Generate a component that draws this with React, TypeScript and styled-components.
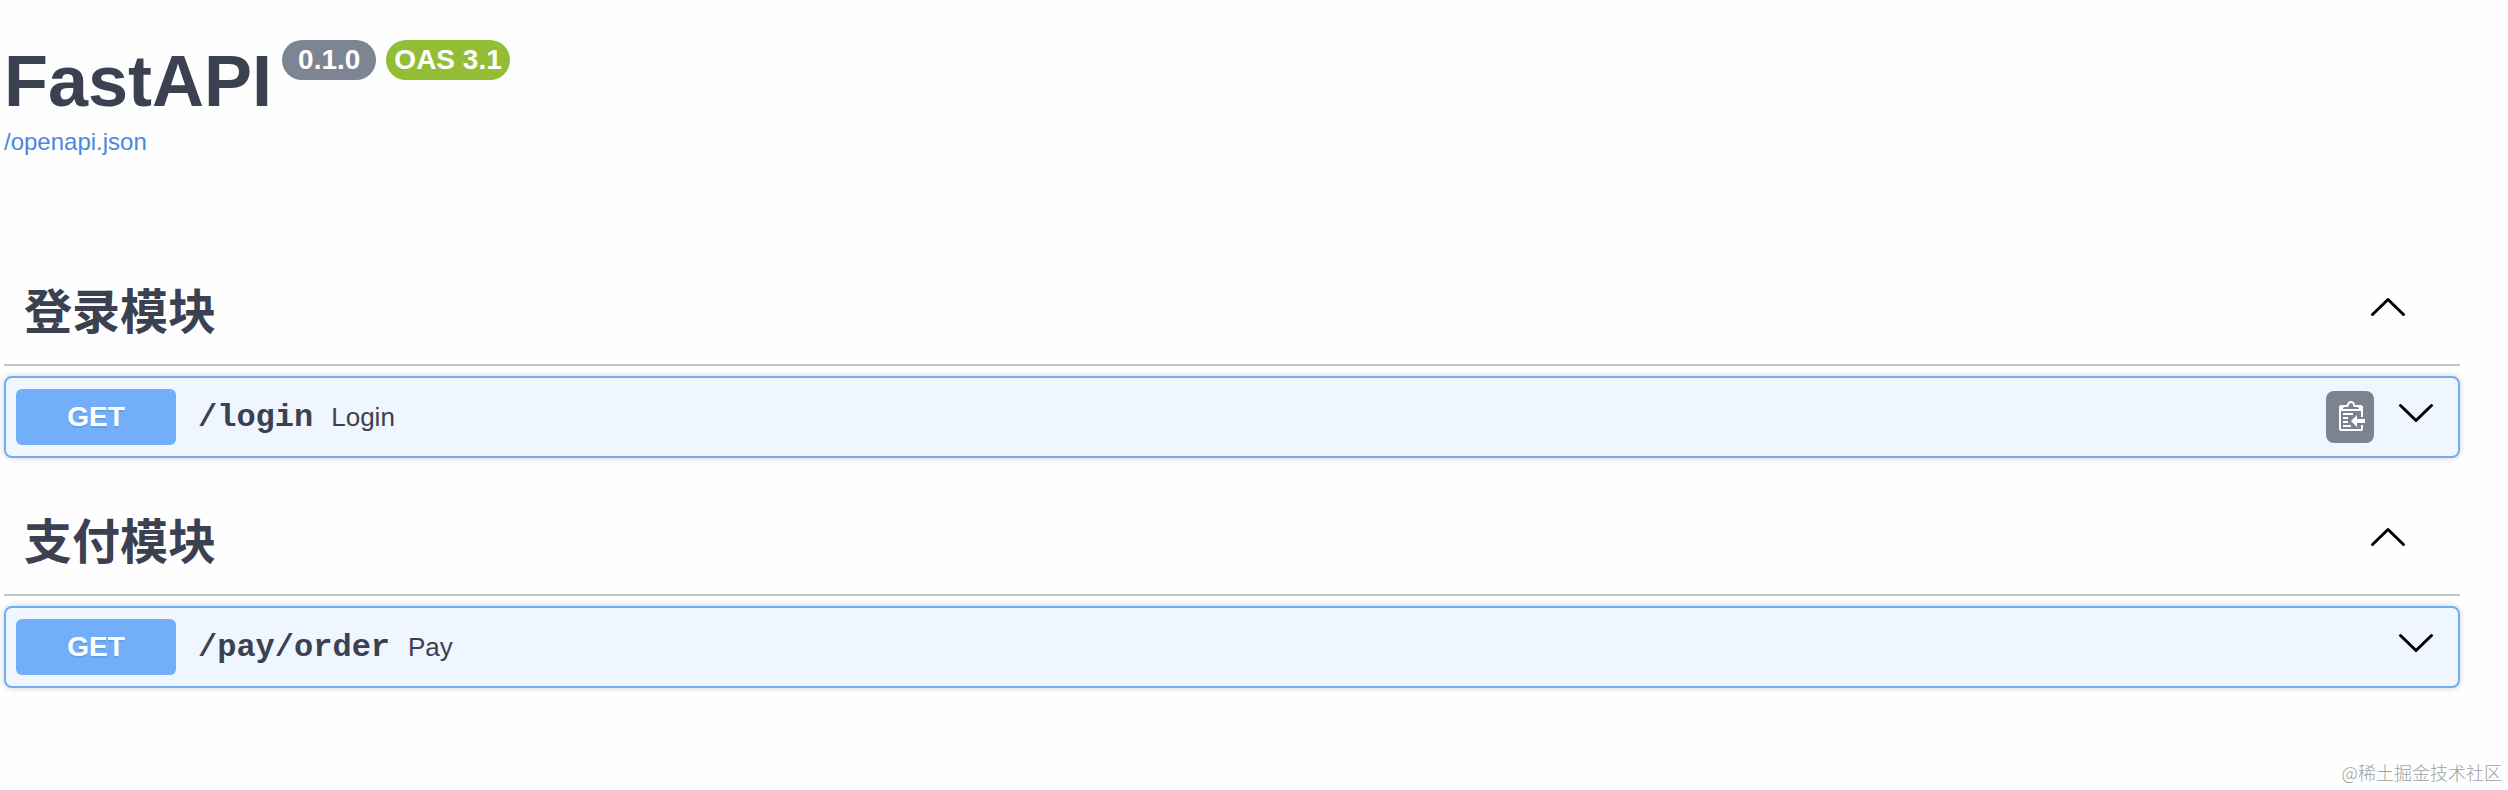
import React, { useState } from "react";
import styled, { createGlobalStyle } from "styled-components";

const GlobalStyle = createGlobalStyle`
  *, *::before, *::after { box-sizing: border-box; }
  body {
    margin: 0;
    background: #fefefe;
    color: #3b4151;
    font-family: "Liberation Sans", "Noto Sans CJK SC", sans-serif;
  }
  button { font: inherit; color: inherit; border: 0; background: none; cursor: pointer; }
`;

const Page = styled.div`
  display: flex;
  flex-direction: column;
  min-height: 100vh;
`;

const Content = styled.main`
  flex: 1;
  padding: 40px 48px 0 4px;
`;

const Info = styled.header`
  display: flex;
  flex-direction: column;
  align-items: flex-start;
  margin-bottom: 96px;
`;

const TitleRow = styled.div`
  display: flex;
  align-items: flex-start;
  gap: 10px;
`;

const Title = styled.h1`
  margin: 0;
  font-size: 72px;
  line-height: 82px;
  font-weight: 700;
`;

const Badge = styled.span<{ $color: string; $pad: number }>`
  padding: 0 ${(p) => p.$pad}px;
  border-radius: 20px;
  background: ${(p) => p.$color};
  color: #fff;
  font-size: 28px;
  line-height: 40px;
  font-weight: 700;
  white-space: nowrap;
`;

const SpecLink = styled.a`
  color: #4a88dc;
  font-size: 24px;
  line-height: 40px;
  text-decoration: none;
`;

const Section = styled.section`
  margin-bottom: 30px;
`;

const SectionHeader = styled.div`
  display: flex;
  align-items: center;
  justify-content: space-between;
  height: 108px;
  margin-bottom: 10px;
  padding: 0 40px 0 20px;
  border-bottom: 2px solid #c4c5c8;
`;

const SectionTitle = styled.h2`
  margin: 0;
  padding-top: 4px;
  font-size: 48px;
  line-height: 64px;
  font-weight: 700;
`;

const IconButton = styled.button`
  display: flex;
  padding: 0 12px;
`;

const Operation = styled.div`
  display: flex;
  align-items: center;
  gap: 10px;
  height: 82px;
  padding: 0 10px;
  border: 2px solid #74acf3;
  border-radius: 8px;
  background: #eff6ff;
  box-shadow: 0 0 6px rgba(0, 0, 0, 0.19);
`;

const Summary = styled.button`
  display: flex;
  flex: 1;
  align-items: center;
  padding: 0;
  text-align: left;
`;

const Method = styled.span`
  width: 160px;
  margin-right: 22px;
  border-radius: 6px;
  background: #72aef9;
  color: #fff;
  font-size: 28px;
  line-height: 56px;
  font-weight: 700;
  text-align: center;
  text-shadow: 0 2px 0 rgba(0, 0, 0, 0.1);
`;

const Path = styled.span`
  padding-top: 2px;
  margin-right: 18px;
  font-family: "Liberation Mono", monospace;
  font-size: 32px;
  line-height: 40px;
  font-weight: 700;
`;

const Description = styled.span`
  font-size: 26px;
  line-height: 40px;
`;

const CopyButton = styled.button`
  display: flex;
  align-items: center;
  justify-content: center;
  width: 48px;
  height: 52px;
  padding: 0;
  border-radius: 8px;
  background: #7d8293;
`;

const Watermark = styled.footer`
  padding: 0 6px 6px;
  color: #a0a0a0;
  font-family: "Noto Sans CJK SC", sans-serif;
  font-size: 18px;
  line-height: 24px;
  font-weight: 300;
  text-align: right;
`;

function Chevron({ up }: { up?: boolean }) {
  return (
    <svg width="40" height="40" viewBox="0 0 40 40" fill="none" stroke="#000" strokeWidth="3" strokeLinecap="round" strokeLinejoin="round" aria-hidden="true">
      <path d={up ? "M4.5 23.5 20 8.5l15.5 15" : "M4.5 8.5 20 23.5 35.5 8.5"} />
    </svg>
  );
}

function ClipboardIcon() {
  return (
    <svg width="30" height="32" viewBox="0 0 15 16" aria-hidden="true">
      <g transform="translate(2 -1)">
        <path
          fill="#fff"
          fillRule="evenodd"
          d="M2 13h4v1H2v-1zm5-6H2v1h5V7zm2 3V8l-3 3 3 3v-2h5v-2H9zM4.5 9H2v1h2.5V9zM2 12h2.5v-1H2v1zm9 1h1v2c-.02.28-.11.52-.3.7-.19.18-.42.28-.7.3H1c-.55 0-1-.45-1-1V4c0-.55.45-1 1-1h3c0-1.11.89-2 2-2 1.11 0 2 .89 2 2h3c.55 0 1 .45 1 1v5h-1V6H1v9h10v-2zM2 5h8c0-.55-.45-1-1-1H8c-.55 0-1-.45-1-1s-.45-1-1-1-1 .45-1 1-.45 1-1 1H3c-.55 0-1 .45-1 1z"
        />
      </g>
    </svg>
  );
}

type Endpoint = { path: string; description: string; copy?: boolean };

function OperationRow({ path, description, copy }: Endpoint) {
  return (
    <Operation>
      <Summary type="button">
        <Method>GET</Method>
        <Path>{path}</Path>
        <Description>{description}</Description>
      </Summary>
      {copy && (
        <CopyButton type="button" aria-label="Copy to clipboard">
          <ClipboardIcon />
        </CopyButton>
      )}
      <IconButton type="button" aria-label={`Expand ${path}`}>
        <Chevron />
      </IconButton>
    </Operation>
  );
}

function TagSection({ name, endpoints }: { name: string; endpoints: Endpoint[] }) {
  const [open, setOpen] = useState(true);
  return (
    <Section>
      <SectionHeader>
        <SectionTitle>{name}</SectionTitle>
        <IconButton type="button" aria-label={name} aria-expanded={open} onClick={() => setOpen(!open)}>
          <Chevron up={open} />
        </IconButton>
      </SectionHeader>
      {open && endpoints.map((e) => <OperationRow key={e.path} {...e} />)}
    </Section>
  );
}

const tags = [
  { name: "登录模块", endpoints: [{ path: "/login", description: "Login", copy: true }] },
  { name: "支付模块", endpoints: [{ path: "/pay/order", description: "Pay" }] },
];

export default function App() {
  return (
    <Page lang="zh-CN">
      <GlobalStyle />
      <Content>
        <Info>
          <TitleRow>
            <Title>FastAPI</Title>
            <Badge $color="#7d8492" $pad={16}>0.1.0</Badge>
            <Badge $color="#93bd35" $pad={8}>OAS 3.1</Badge>
          </TitleRow>
          <SpecLink href="/openapi.json">/openapi.json</SpecLink>
        </Info>
        {tags.map((t) => (
          <TagSection key={t.name} {...t} />
        ))}
      </Content>
      <Watermark>@稀土掘金技术社区</Watermark>
    </Page>
  );
}
